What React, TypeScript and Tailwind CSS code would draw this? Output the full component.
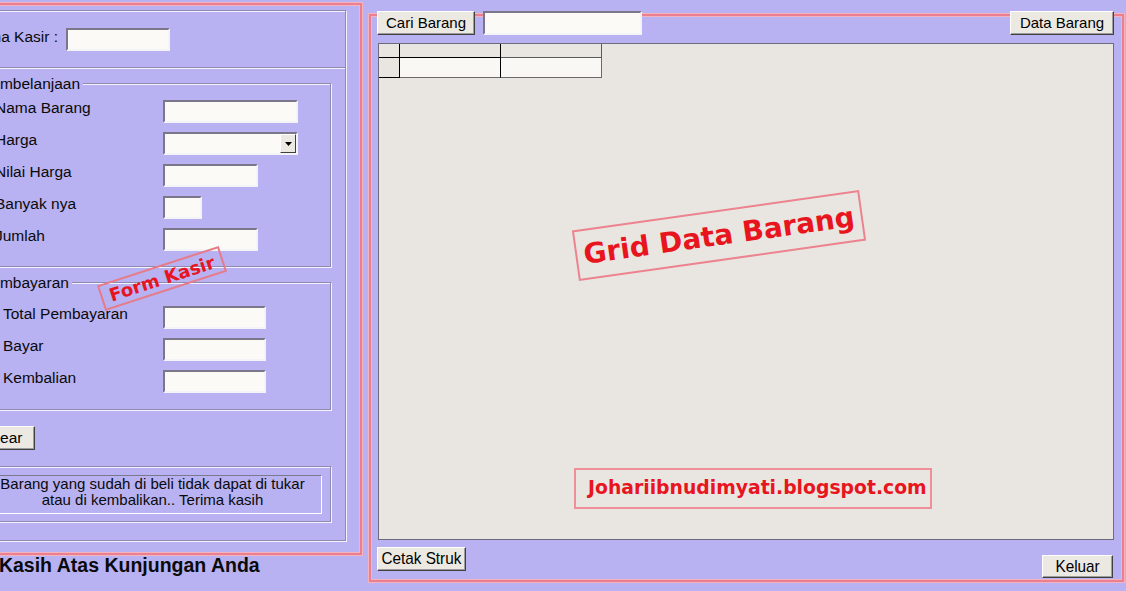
import React from "react";

const inputCls =
  "h-[23px] bg-[#fbfaf6] border-2 border-t-[#7b7788] border-l-[#7b7788] border-b-[#f4f3f8] border-r-[#f4f3f8]";
const btnCls =
  "bg-[#ece9e3] border border-t-white border-l-white border-b-[#404040] border-r-[#404040] shadow-[inset_-1px_-1px_0_#9d9d9d] flex items-center justify-center text-black";
const etched = "border border-[#8f8bb0] shadow-[inset_1px_1px_0_#f4f2ff,1px_1px_0_#f4f2ff]";

function Field({
  label,
  wide,
  input,
}: {
  label: string;
  wide: boolean;
  input: React.ReactNode;
}) {
  return (
    <div className="flex items-start h-[23px]">
      <div
        className={
          wide
            ? "w-[168px] shrink-0 leading-[17px] -mt-[1px] whitespace-nowrap"
            : "w-[160px] shrink-0 leading-[17px] -mt-[1px] whitespace-nowrap"
        }
      >
        {label}
      </div>
      {input}
    </div>
  );
}

function Combo() {
  return (
    <div className={inputCls + " w-[135px] flex justify-end"}>
      <div className="w-[16px] h-full bg-[#ece9e3] border border-t-white border-l-white border-b-[#404040] border-r-[#404040] flex items-center justify-center">
        <svg width="7" height="4" viewBox="0 0 7 4">
          <polygon points="0,0 7,0 3.5,4" fill="#000" />
        </svg>
      </div>
    </div>
  );
}

export default function App() {
  return (
    <div className="relative w-[1126px] h-[591px] overflow-hidden bg-[#b8b1f2] flex font-['Liberation_Sans',Arial,sans-serif] text-[15.5px] text-[#0a0a0a]">
      {/* red annotation frames (behind controls) */}
      <div className="absolute left-[-10px] top-[3px] w-[372px] h-[552px] border-2 border-[#ea7f8f] shadow-[0_0_0_1px_#f4b3be,inset_0_0_0_1px_#f4b3be]" />
      <div className="absolute left-[369px] top-[14px] w-[755px] h-[568px] border-2 border-[#ea7f8f] shadow-[0_0_0_1px_#f4b3be,inset_0_0_0_1px_#f4b3be]" />

      {/* Left column */}
      <div className="relative z-10 -ml-[64px] w-[410px] shrink-0 pt-[10px] flex flex-col">
        <div className={etched + " h-[531px] flex flex-col"}>
          <div className="h-[57px] shrink-0 flex items-center border-b border-[#8f8bb0] shadow-[0_1px_0_#f4f2ff]">
            <div className="w-[129px] shrink-0 leading-[17px] mb-[5px] pr-[8px] text-right whitespace-nowrap">Nama Kasir :</div>
            <div className={inputCls + " w-[104px]"} />
          </div>

          <fieldset className={etched + " mt-[7px] ml-[39px] mr-[14px] pt-[8px] pb-[15px] pl-[18px]"}>
            <legend className="-ml-[14px] pr-[3px] leading-[17px] bg-[#b8b1f2]">Pembelanjaan</legend>
            <div className="flex flex-col gap-[9px]">
              <Field wide label="Nama Barang" input={<div className={inputCls + " w-[135px]"} />} />
              <Field wide label="Harga" input={<Combo />} />
              <Field wide label="Nilai Harga" input={<div className={inputCls + " w-[95px]"} />} />
              <Field wide label="Banyak nya" input={<div className={inputCls + " w-[39px]"} />} />
              <Field wide label="Jumlah" input={<div className={inputCls + " w-[95px]"} />} />
            </div>
          </fieldset>

          <fieldset className={etched + " mt-[7px] ml-[39px] mr-[14px] pt-[15px] pb-[16px] pl-[26px]"}>
            <legend className="-ml-[22px] pr-[3px] leading-[17px] bg-[#b8b1f2]">Pembayaran</legend>
            <div className="flex flex-col gap-[9px]">
              <Field wide={false} label="Total Pembayaran" input={<div className={inputCls + " w-[103px]"} />} />
              <Field wide={false} label="Bayar" input={<div className={inputCls + " w-[103px]"} />} />
              <Field wide={false} label="Kembalian" input={<div className={inputCls + " w-[103px]"} />} />
            </div>
          </fieldset>

          <div className={btnCls + " mt-[16px] ml-[36px] w-[62px] h-[24px]"}>Clear</div>

          <div className={etched + " mt-[16px] ml-[37px] mr-[14px] pt-[8px] pb-[7px] pl-[8px] pr-[8px]"}>
            <div className="h-[39px] border border-t-[#7c7890] border-l-[#7c7890] border-b-white border-r-white text-center text-[15px] leading-[16px] whitespace-nowrap">
              Barang yang sudah di beli tidak dapat di tukar
              <br />
              atau di kembalikan.. Terima kasih
            </div>
          </div>
        </div>
        <div className="mt-[13px] -ml-[5px] font-bold text-[19.5px] leading-[22px] whitespace-nowrap">
          Terima Kasih Atas Kunjungan Anda
        </div>
      </div>

      {/* Right column */}
      <div className="relative z-10 ml-[31px] w-[737px] shrink-0 pt-[11px] flex flex-col">
        <div className="h-[24px] flex">
          <div className={btnCls + " w-[98px] text-[15px]"}>Cari Barang</div>
          <div className="ml-[8px] w-[159px] h-[24px] bg-[#fbfaf6] border-2 border-t-[#7b7788] border-l-[#7b7788] border-b-[#f4f3f8] border-r-[#f4f3f8]" />
          <div className={btnCls + " ml-auto w-[104px] text-[15px]"}>Data Barang</div>
        </div>

        <div className="mt-[8px] ml-[1px] w-[736px] h-[497px] bg-[#e9e6e2] border border-[#6d6a7c]">
          <div className="flex h-[14px]">
            <div className="w-[21px] border-r border-b border-black" />
            <div className="w-[101px] border-r border-b border-black" />
            <div className="w-[101px] border-r border-b border-[#5a5a5a]" />
          </div>
          <div className="flex h-[20px]">
            <div className="w-[21px] border-r border-b border-black" />
            <div className="w-[101px] border-r border-b border-r-black border-b-[#6a6a6a] bg-[#f9f8f5]" />
            <div className="w-[101px] border-r border-b border-[#6a6a6a] bg-[#f9f8f5]" />
          </div>
        </div>

        <div className="mt-[7px] flex justify-between items-start">
          <div className={btnCls + " w-[89px] h-[24px]"}>
            <span className="inline-block text-[17px] scale-x-[0.9] whitespace-nowrap">Cetak Struk</span>
          </div>
          <div className={btnCls + " mt-[8px] mr-[1px] w-[71px] h-[23px]"}>
            <span className="inline-block text-[17px] scale-x-[0.9] whitespace-nowrap">Keluar</span>
          </div>
        </div>
      </div>

      {/* stamps */}
      <div className="absolute z-20 left-[98px] top-[265px] w-[128px] h-[27px] rotate-[-18deg] border-2 border-[#e77b88] flex items-center justify-center">
        <span className="font-['DejaVu_Sans',sans-serif] font-bold text-[18px] leading-none text-[#e8141e] whitespace-nowrap">Form Kasir</span>
      </div>
      <div className="absolute z-20 left-[574px] top-[210px] w-[290px] h-[51px] rotate-[-8deg] border-2 border-[#ec838f] flex items-center justify-center">
        <span className="font-['DejaVu_Sans',sans-serif] font-bold text-[28px] leading-none text-[#e8141e] whitespace-nowrap">Grid Data Barang</span>
      </div>
      <div className="absolute z-20 left-[574px] top-[468px] w-[358px] h-[41px] border-2 border-[#ef8f99] flex items-center pl-[12px]">
        <span className="font-['DejaVu_Sans',sans-serif] font-bold text-[18.8px] leading-none text-[#e8141e] whitespace-nowrap">Johariibnudimyati.blogspot.com</span>
      </div>
    </div>
  );
}
